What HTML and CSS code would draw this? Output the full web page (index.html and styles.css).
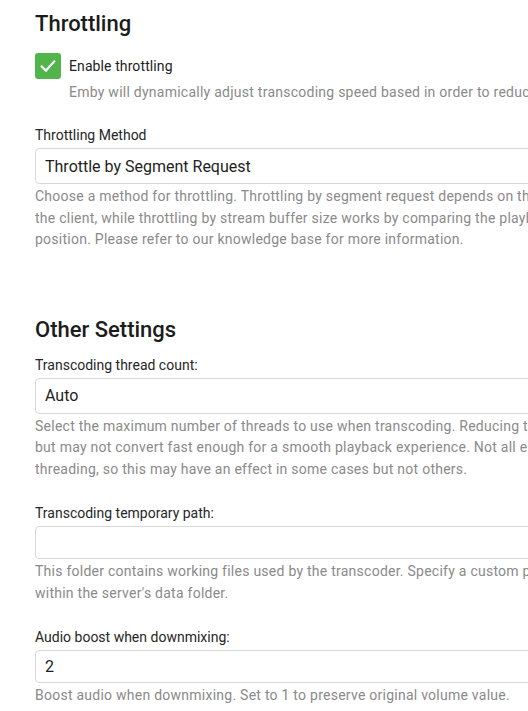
FILE: index.html
```html
<!DOCTYPE html>
<html>
<head>
<meta charset="utf-8">
<link rel="stylesheet" href="styles.css">
</head>
<body>
<div class="page">
  <section class="section">
    <h2 class="section-title">Throttling</h2>
    <div class="check-field">
      <div class="check-row">
        <span class="checkbox">
          <svg viewBox="0 0 24 24" width="20" height="20"><path d="M4.5 12.5 L9.5 17.5 L19.5 6.5" fill="none" stroke="#fff" stroke-width="2.6" stroke-linecap="square"/></svg>
        </span>
        <span class="check-label">Enable throttling</span>
      </div>
      <div class="check-desc">Emby will dynamically adjust transcoding speed based in order to reduce server CPU usage and maintain smooth playback.</div>
    </div>
    <div class="field">
      <label class="field-label">Throttling Method</label>
      <div class="select">Throttle by Segment Request</div>
      <div class="field-desc">Choose a method for throttling. Throttling by segment request depends on the rate at which segments are requested by<br>the client, while throttling by stream buffer size works by comparing the playback position with the transcoding<br>position. Please refer to our knowledge base for more information.</div>
    </div>
  </section>

  <section class="section section-other">
    <h2 class="section-title">Other Settings</h2>
    <div class="field field-first">
      <label class="field-label">Transcoding thread count:</label>
      <div class="select">Auto</div>
      <div class="field-desc">Select the maximum number of threads to use when transcoding. Reducing the thread count will lower CPU usage<br>but may not convert fast enough for a smooth playback experience. Not all encoders support multi-<br>threading, so this may have an effect in some cases but not others.</div>
    </div>
    <div class="field field-gap">
      <label class="field-label">Transcoding temporary path:</label>
      <div class="input"></div>
      <div class="field-desc">This folder contains working files used by the transcoder. Specify a custom path, or leave empty to use the default<br>within the server's data folder.</div>
    </div>
    <div class="field field-gap">
      <label class="field-label">Audio boost when downmixing:</label>
      <div class="input">2</div>
      <div class="field-desc">Boost audio when downmixing. Set to 1 to preserve original volume value.</div>
    </div>
  </section>
</div>
</body>
</html>
```
FILE: styles.css
```css
html, body {
  margin: 0;
  padding: 0;
  background: #fff;
  overflow: hidden;
}
body {
  font-family: Roboto, "Noto Sans", sans-serif;
  color: #222;
}
.page {
  width: 900px;
  padding: 0 0 0 35px;
}
.section-title {
  margin: 0;
  font-size: 22px;
  font-weight: 500;
  line-height: 1;
  color: #1c1c1c;
}
.section:first-child .section-title {
  padding-top: 13px;
}
.check-field {
  margin-top: 18px;
}
.check-row {
  display: flex;
  align-items: center;
  gap: 8px;
}
.checkbox {
  width: 26px;
  height: 26px;
  border-radius: 3px;
  background: #52b54b;
  display: flex;
  align-items: center;
  justify-content: center;
}
.check-label {
  font-size: 14px;
  color: #222;
  letter-spacing: 0.1px;
}
.check-desc {
  margin: 3px 0 0 34px;
  font-size: 14px;
  line-height: 20px;
  color: #8a8a8a;
  white-space: nowrap;
  letter-spacing: 0.25px;
}
.field {
  margin-top: 24px;
}
.field-label {
  display: block;
  font-size: 14px;
  line-height: 18px;
  color: #262626;
  margin-bottom: 4px;
}
.select, .input {
  box-sizing: border-box;
  height: 36px;
  border: 1px solid #d8d8d8;
  border-radius: 4px;
  padding: 0 9px;
  display: flex;
  align-items: center;
  font-size: 16px;
  color: #1e1e1e;
}
.input {
  height: 33px;
}
.field-desc {
  margin-top: 2px;
  font-size: 14px;
  line-height: 21.5px;
  color: #8a8a8a;
  white-space: nowrap;
  letter-spacing: 0.25px;
}
.section-other {
  margin-top: 68px;
}
.field-first {
  margin-top: 15px;
}
.field-gap {
  margin-top: 24px;
}
```
